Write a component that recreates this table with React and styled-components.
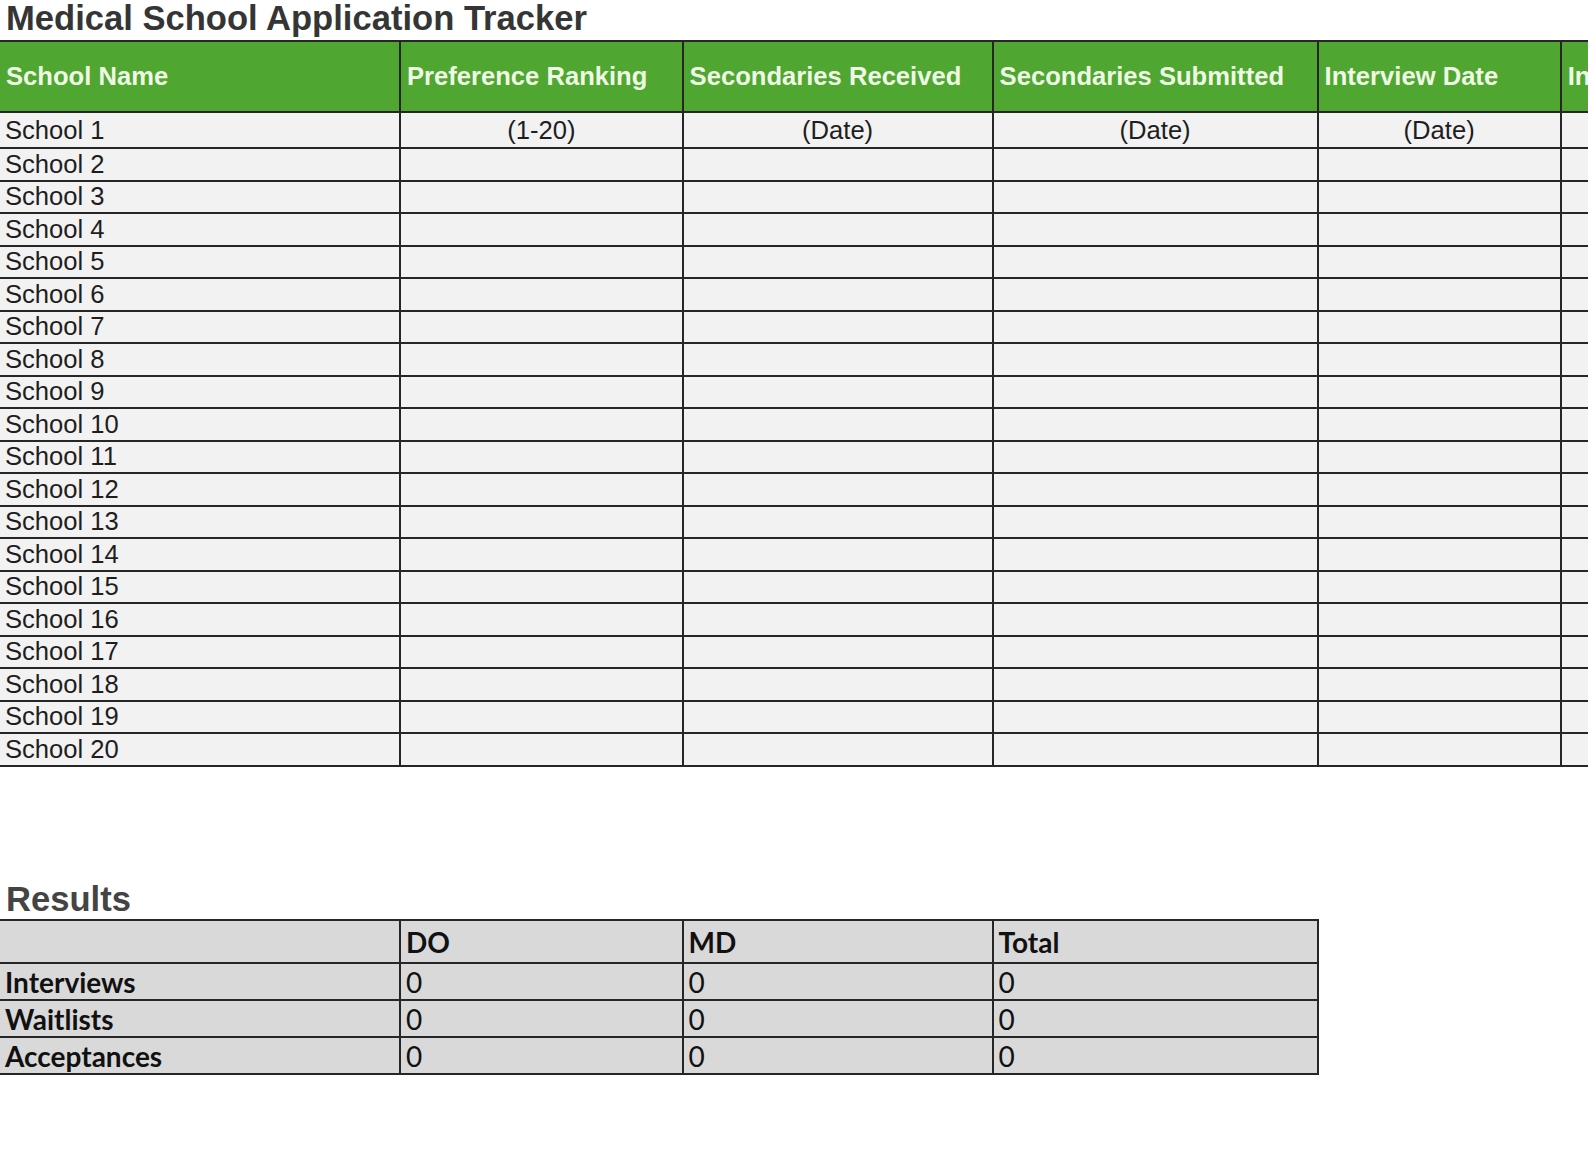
import styled, { createGlobalStyle } from 'styled-components';

const GlobalStyle = createGlobalStyle`
  html, body {
    margin: 0;
    padding: 0;
    background: #ffffff;
  }
  * {
    box-sizing: border-box;
  }
`;

const Page = styled.div`
  width: 100%;
  overflow: hidden;
  font-family: "Liberation Sans", Arial, sans-serif;
`;

const SheetTitle = styled.h1`
  margin: 0;
  height: ${(p) => p.$height || 40}px;
  margin-top: ${(p) => p.$top || 0}px;
  padding-left: 6px;
  font-size: 34.6px;
  line-height: 36px;
  font-weight: 700;
  color: ${(p) => p.$color || '#353535'};
  white-space: nowrap;
`;

const TrackerGrid = styled.div`
  display: grid;
  grid-template-columns: 401px 282.6px 310px 325px 243.1px 260px;
  grid-template-rows: 71px 36px repeat(19, 32.5px);
  width: max-content;
  border-top: 2px solid #262626;
`;

const HeadCell = styled.div`
  display: flex;
  align-items: center;
  padding: 0 6px;
  background: #4fa630;
  color: #eef8e4;
  font-size: 25.6px;
  font-weight: 700;
  white-space: nowrap;
  overflow: hidden;
  border-right: 2px solid #262626;
  border-bottom: 2px solid #262626;
`;

const BodyCell = styled.div`
  display: flex;
  align-items: center;
  justify-content: ${(p) => (p.$center ? 'center' : 'flex-start')};
  padding: 0 5px;
  background: #f2f2f2;
  color: #1e1e1e;
  font-size: 25.6px;
  white-space: nowrap;
  border-right: 2px solid #262626;
  border-bottom: 2px solid #262626;
`;

const ResultsGrid = styled.div`
  display: grid;
  grid-template-columns: 401px 282.6px 310px 325px;
  grid-template-rows: 43px repeat(3, 37.2px);
  width: max-content;
  border-top: 2px solid #262626;
`;

const ResultCell = styled.div`
  display: flex;
  align-items: center;
  padding: 2px 5px 0;
  background: #d9d9d9;
  color: #111111;
  font-family: Lato, "Open Sans", sans-serif;
  font-size: 28px;
  font-weight: ${(p) => (p.$bold ? 700 : 400)};
  white-space: nowrap;
  border-right: 2px solid #262626;
  border-bottom: 2px solid #262626;
`;

const headers = [
  'School Name',
  'Preference Ranking',
  'Secondaries Received',
  'Secondaries Submitted',
  'Interview Date',
  'Interview Result',
];

const schools = Array.from({ length: 20 }, (_, i) => `School ${i + 1}`);

const firstRow = ['(1-20)', '(Date)', '(Date)', '(Date)', ''];

const results = [
  { label: 'Interviews', values: [0, 0, 0] },
  { label: 'Waitlists', values: [0, 0, 0] },
  { label: 'Acceptances', values: [0, 0, 0] },
];

const App = () => {
  return (
    <Page>
      <GlobalStyle />
      <SheetTitle>Medical School Application Tracker</SheetTitle>
      <TrackerGrid>
        {headers.map((h) => (
          <HeadCell key={h}>{h}</HeadCell>
        ))}
        {schools.map((name, row) => (
          <>
            <BodyCell key={name}>{name}</BodyCell>
            {firstRow.map((val, col) => (
              <BodyCell key={`${name}-${col}`} $center>
                {row === 0 ? val : ''}
              </BodyCell>
            ))}
          </>
        ))}
      </TrackerGrid>

      <SheetTitle $top={114} $height={38} $color="#444444">
        Results
      </SheetTitle>
      <ResultsGrid>
        <ResultCell />
        <ResultCell $bold>DO</ResultCell>
        <ResultCell $bold>MD</ResultCell>
        <ResultCell $bold>Total</ResultCell>
        {results.map((r) => (
          <>
            <ResultCell key={r.label} $bold>{r.label}</ResultCell>
            {r.values.map((v, i) => (
              <ResultCell key={`${r.label}-${i}`}>{v}</ResultCell>
            ))}
          </>
        ))}
      </ResultsGrid>
    </Page>
  );
};

export default App;
